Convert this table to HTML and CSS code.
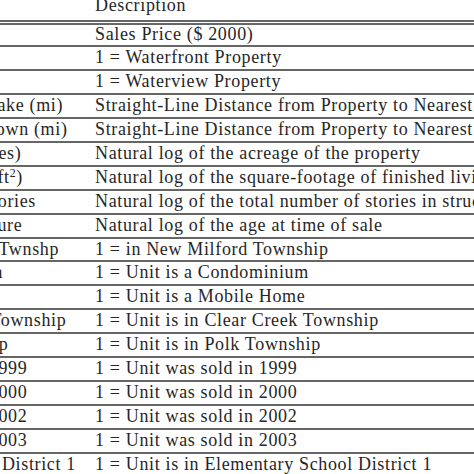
FILE: index.html
```html
<!DOCTYPE html>
<html lang="en">
<head>
<meta charset="utf-8">
<title>Variable descriptions</title>
<link rel="stylesheet" href="styles.css">
</head>
<body>
<div class="table">
  <div class="row head"><div class="var">Variable</div><div class="desc">Description</div></div>
  <div class="row first"><div class="var">Sales Price</div><div class="desc">Sales Price ($ 2000)</div></div>
  <div class="row"><div class="var">Waterfront</div><div class="desc">1 = Waterfront Property</div></div>
  <div class="row"><div class="var">Waterview</div><div class="desc">1 = Waterview Property</div></div>
  <div class="row"><div class="var">Distance to Lake (mi)</div><div class="desc">Straight-Line Distance from Property to Nearest Lake</div></div>
  <div class="row"><div class="var">Distance to Town (mi)</div><div class="desc">Straight-Line Distance from Property to Nearest Town</div></div>
  <div class="row"><div class="var">Lot Size (Acres)</div><div class="desc">Natural log of the acreage of the property</div></div>
  <div class="row"><div class="var">Living Area (ft<sup>2</sup>)</div><div class="desc">Natural log of the square-footage of finished living area</div></div>
  <div class="row"><div class="var">Number of Stories</div><div class="desc">Natural log of the total number of stories in structure</div></div>
  <div class="row"><div class="var">Age of Structure</div><div class="desc">Natural log of the age at time of sale</div></div>
  <div class="row"><div class="var">New Milford Twnshp</div><div class="desc">1 = in New Milford Township</div></div>
  <div class="row"><div class="var">Condominium</div><div class="desc">1 = Unit is a Condominium</div></div>
  <div class="row"><div class="var">Mobile Home</div><div class="desc">1 = Unit is a Mobile Home</div></div>
  <div class="row"><div class="var">Clear Creek Township</div><div class="desc">1 = Unit is in Clear Creek Township</div></div>
  <div class="row"><div class="var">Polk Township</div><div class="desc">1 = Unit is in Polk Township</div></div>
  <div class="row"><div class="var">Sold during 1999</div><div class="desc">1 = Unit was sold in 1999</div></div>
  <div class="row"><div class="var">Sold during 2000</div><div class="desc">1 = Unit was sold in 2000</div></div>
  <div class="row"><div class="var">Sold during 2002</div><div class="desc">1 = Unit was sold in 2002</div></div>
  <div class="row"><div class="var">Sold during 2003</div><div class="desc">1 = Unit was sold in 2003</div></div>
  <div class="row"><div class="var">Elem. School District 1</div><div class="desc">1 = Unit is in Elementary School District 1</div></div>
</div>
</body>
</html>
```

FILE: styles.css
```css
html, body {
  margin: 0;
  padding: 0;
  background: #ffffff;
}
body {
  width: 474px;
  height: 474px;
  overflow: hidden;
  font-family: "Liberation Serif", "Times New Roman", serif;
  font-size: 18px;
  letter-spacing: 0.65px;
  color: #262626;
}
.table {
  margin-left: -108px;
  width: 720px;
}
.row {
  display: grid;
  grid-template-columns: 203px 1fr;
  white-space: nowrap;
  height: 21.94px;
  line-height: 20px;
  border-bottom: 2px solid #666666;
}
.head {
  margin-top: -3px;
  height: 23px;
  line-height: 17px;
}
.first {
  margin-top: 1px;
  border-top: 2px solid #666666;
  height: 20px;
  line-height: 18px;
}
.var, .desc {
  overflow: hidden;
}
sup {
  font-size: 0.66em;
  line-height: 0;
  vertical-align: 0.5em;
}
```
